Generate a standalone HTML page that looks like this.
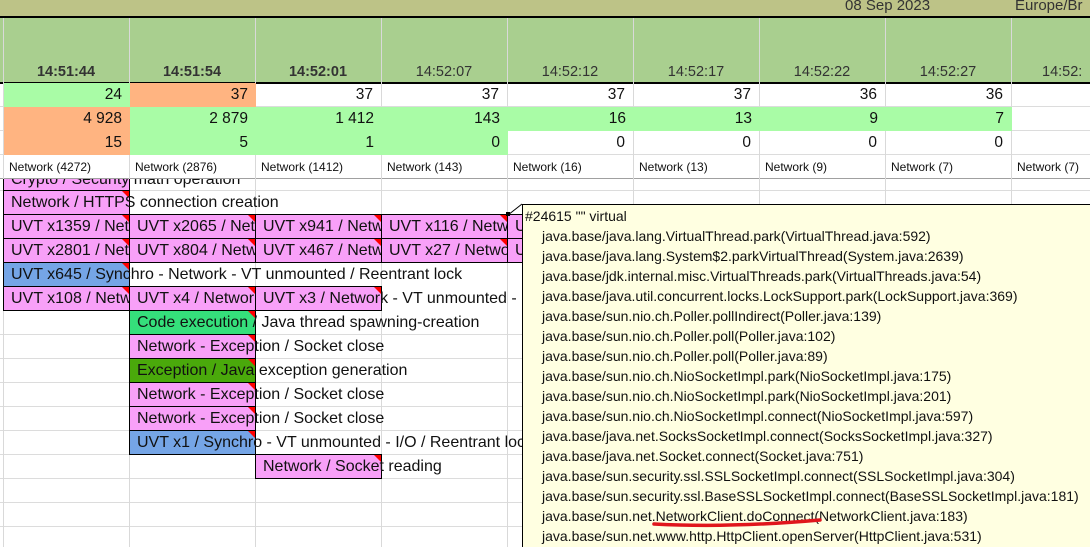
<!DOCTYPE html>
<html><head><meta charset="utf-8"><style>
*{margin:0;padding:0;box-sizing:border-box}
html,body{width:1090px;height:547px;overflow:hidden}
body{background:#fff;position:relative;font-family:"Liberation Sans",Calibri,sans-serif;color:#111}
.a{position:absolute}
.vl{position:absolute;width:1px;background:#d9d9d9}
.hl{position:absolute;height:1px;background:#dcdcdc;left:0;width:1090px}
.ts{position:absolute;top:64px;width:126px;text-align:center;font-size:14.5px;color:#333}
.num{position:absolute;height:24px;width:126px;text-align:right;padding-right:8px;font-size:15.5px;line-height:24px}
.net{position:absolute;top:155px;height:23px;font-size:12px;line-height:24px;padding-left:6px;color:#111}
.c{position:absolute;height:25px;width:127px;border:1px solid #000;}
.c::after{content:"";position:absolute;right:0;top:0;border-top:7px solid #f00;border-left:7px solid transparent}
.t{position:absolute;font-size:16px;line-height:24px;white-space:nowrap;overflow:hidden;color:#111}
.pk{background:#f8a0f8}.bl{background:#75a5e6}.gr{background:#35df7b}.dg{background:#4aa90b}
.tip{position:absolute;left:522px;top:204px;width:600px;height:343px;background:#ffffe1;border:1px solid #000;border-bottom:none;border-right:none;overflow:hidden}
.tl{position:absolute;left:19px;font-size:14px;line-height:20px;white-space:nowrap;color:#111}
</style></head><body>
<div class="a" style="left:0;top:0;width:1090px;height:16px;background:#bdc387"></div>
<div class="a" style="left:845px;top:-3px;font-size:15px;color:#333">08 Sep 2023</div>
<div class="a" style="left:1015px;top:-3px;font-size:15px;color:#333">Europe/Br</div>
<div class="a" style="left:0;top:16px;width:1090px;height:2px;background:#000"></div>
<div class="a" style="left:0;top:18px;width:1090px;height:64px;background:#a9cf8f"></div>
<div class="a" style="left:0;top:82px;width:1090px;height:2px;background:#000"></div>

<div class="hl" style="top:106px"></div><div class="hl" style="top:130px"></div><div class="hl" style="top:154px"></div>
<div class="a" style="left:0;top:178px;width:1090px;height:1px;background:#a0a0a0"></div>
<div class="hl" style="top:190px"></div>
<div class="hl" style="top:334px"></div><div class="hl" style="top:358px"></div><div class="hl" style="top:382px"></div><div class="hl" style="top:406px"></div><div class="hl" style="top:430px"></div><div class="hl" style="top:454px"></div><div class="hl" style="top:478px"></div><div class="hl" style="top:502px"></div><div class="hl" style="top:526px"></div>
<div class="vl" style="left:3px;top:18px;height:530px"></div>
<div class="vl" style="left:129px;top:18px;height:530px"></div>
<div class="vl" style="left:255px;top:18px;height:530px"></div>
<div class="vl" style="left:381px;top:18px;height:530px"></div>
<div class="vl" style="left:507px;top:18px;height:530px"></div>
<div class="vl" style="left:633px;top:18px;height:530px"></div>
<div class="vl" style="left:759px;top:18px;height:530px"></div>
<div class="vl" style="left:885px;top:18px;height:530px"></div>
<div class="vl" style="left:1011px;top:18px;height:530px"></div>

<div class="ts" style="left:3px;font-weight:bold">14:51:44</div>
<div class="ts" style="left:129px;font-weight:bold">14:51:54</div>
<div class="ts" style="left:255px;font-weight:bold">14:52:01</div>
<div class="ts" style="left:381px">14:52:07</div>
<div class="ts" style="left:507px">14:52:12</div>
<div class="ts" style="left:633px">14:52:17</div>
<div class="ts" style="left:759px">14:52:22</div>
<div class="ts" style="left:885px">14:52:27</div>
<div class="ts" style="left:1011px;text-align:left;padding-left:31px">14:52:</div>

<div class="num" style="left:4px;top:83px;background:#a9fca6">24</div>
<div class="num" style="left:130px;top:83px;background:#ffb481">37</div>
<div class="num" style="left:255px;top:83px">37</div>
<div class="num" style="left:381px;top:83px">37</div>
<div class="num" style="left:507px;top:83px">37</div>
<div class="num" style="left:633px;top:83px">37</div>
<div class="num" style="left:759px;top:83px">36</div>
<div class="num" style="left:885px;top:83px">36</div>

<div class="num" style="left:4px;top:107px;background:#ffb481">4 928</div>
<div class="num" style="left:130px;top:107px;background:#a9fca6">2 879</div>
<div class="num" style="left:256px;top:107px;background:#a9fca6">1 412</div>
<div class="num" style="left:382px;top:107px;background:#a9fca6">143</div>
<div class="num" style="left:508px;top:107px;background:#a9fca6">16</div>
<div class="num" style="left:634px;top:107px;background:#a9fca6">13</div>
<div class="num" style="left:760px;top:107px;background:#a9fca6">9</div>
<div class="num" style="left:886px;top:107px;background:#a9fca6">7</div>

<div class="num" style="left:4px;top:131px;background:#ffb481">15</div>
<div class="num" style="left:130px;top:131px;background:#a9fca6">5</div>
<div class="num" style="left:256px;top:131px;background:#a9fca6">1</div>
<div class="num" style="left:382px;top:131px;background:#a9fca6">0</div>
<div class="num" style="left:507px;top:131px">0</div>
<div class="num" style="left:633px;top:131px">0</div>
<div class="num" style="left:759px;top:131px">0</div>
<div class="num" style="left:885px;top:131px">0</div>

<div class="net" style="left:3px">Network (4272)</div>
<div class="net" style="left:129px">Network (2876)</div>
<div class="net" style="left:255px">Network (1412)</div>
<div class="net" style="left:381px">Network (143)</div>
<div class="net" style="left:507px">Network (16)</div>
<div class="net" style="left:633px">Network (13)</div>
<div class="net" style="left:759px">Network (9)</div>
<div class="net" style="left:885px">Network (7)</div>
<div class="net" style="left:1011px">Network (7)</div>

<div class="a" style="left:3px;top:179px;width:1087px;height:12px;overflow:hidden">
 <div class="a pk" style="left:0;top:0;width:127px;height:12px;border-left:1px solid #000;border-right:1px solid #000"></div>
 <div class="t" style="left:8px;top:-11px">Crypto / Security math operation</div>
</div>

<div class="c pk" style="left:3px;top:190px"></div><div class="t" style="left:11px;top:191px">Network / HTTPS connection creation</div>

<div class="c pk" style="left:3px;top:214px"></div><div class="t" style="left:11px;top:215px;width:118px">UVT x1359 / Network</div>
<div class="c pk" style="left:129px;top:214px"></div><div class="t" style="left:137px;top:215px;width:118px">UVT x2065 / Network</div>
<div class="c pk" style="left:255px;top:214px"></div><div class="t" style="left:263px;top:215px;width:118px">UVT x941 / Network</div>
<div class="c pk" style="left:381px;top:214px"></div><div class="t" style="left:389px;top:215px;width:118px">UVT x116 / Network</div>
<div class="c pk" style="left:507px;top:214px"></div><div class="t" style="left:515px;top:215px;width:118px">UVT</div>

<div class="c pk" style="left:3px;top:238px"></div><div class="t" style="left:11px;top:239px;width:118px">UVT x2801 / Network</div>
<div class="c pk" style="left:129px;top:238px"></div><div class="t" style="left:137px;top:239px;width:118px">UVT x804 / Network</div>
<div class="c pk" style="left:255px;top:238px"></div><div class="t" style="left:263px;top:239px;width:118px">UVT x467 / Network</div>
<div class="c pk" style="left:381px;top:238px"></div><div class="t" style="left:389px;top:239px;width:118px">UVT x27 / Network</div>
<div class="c pk" style="left:507px;top:238px"></div><div class="t" style="left:515px;top:239px;width:118px">UVT</div>

<div class="c bl" style="left:3px;top:262px"></div><div class="t" style="left:11px;top:263px">UVT x645 / Synchro - Network - VT unmounted / Reentrant lock</div>

<div class="c pk" style="left:3px;top:286px"></div><div class="t" style="left:11px;top:287px;width:118px">UVT x108 / Network</div>
<div class="c pk" style="left:129px;top:286px"></div><div class="t" style="left:137px;top:287px;width:118px">UVT x4 / Network</div>
<div class="c pk" style="left:255px;top:286px"></div><div class="t" style="left:263px;top:287px">UVT x3 / Network - VT unmounted - I/O</div>

<div class="c gr" style="left:129px;top:310px"></div><div class="t" style="left:137px;top:311px">Code execution / Java thread spawning-creation</div>
<div class="c pk" style="left:129px;top:334px"></div><div class="t" style="left:137px;top:335px">Network - Exception / Socket close</div>
<div class="c dg" style="left:129px;top:358px"></div><div class="t" style="left:137px;top:359px">Exception / Java exception generation</div>
<div class="c pk" style="left:129px;top:382px"></div><div class="t" style="left:137px;top:383px">Network - Exception / Socket close</div>
<div class="c pk" style="left:129px;top:406px"></div><div class="t" style="left:137px;top:407px">Network - Exception / Socket close</div>
<div class="c bl" style="left:129px;top:430px"></div><div class="t" style="left:137px;top:431px">UVT x1 / Synchro - VT unmounted - I/O / Reentrant lock</div>
<div class="c pk" style="left:255px;top:454px"></div><div class="t" style="left:263px;top:455px">Network / Socket reading</div>

<svg class="a" style="left:500px;top:198px" width="30" height="22"><line x1="8" y1="17" x2="22" y2="6" stroke="#000" stroke-width="1"/><rect x="6" y="14" width="4" height="4" fill="#000"/></svg>
<div class="tip">
<div class="tl" style="left:2px;top:1px">#24615 "" virtual</div>
<div class="tl" style="top:21px">java.base/java.lang.VirtualThread.park(VirtualThread.java:592)</div>
<div class="tl" style="top:41px">java.base/java.lang.System$2.parkVirtualThread(System.java:2639)</div>
<div class="tl" style="top:61px">java.base/jdk.internal.misc.VirtualThreads.park(VirtualThreads.java:54)</div>
<div class="tl" style="top:81px">java.base/java.util.concurrent.locks.LockSupport.park(LockSupport.java:369)</div>
<div class="tl" style="top:101px">java.base/sun.nio.ch.Poller.pollIndirect(Poller.java:139)</div>
<div class="tl" style="top:121px">java.base/sun.nio.ch.Poller.poll(Poller.java:102)</div>
<div class="tl" style="top:141px">java.base/sun.nio.ch.Poller.poll(Poller.java:89)</div>
<div class="tl" style="top:161px">java.base/sun.nio.ch.NioSocketImpl.park(NioSocketImpl.java:175)</div>
<div class="tl" style="top:181px">java.base/sun.nio.ch.NioSocketImpl.park(NioSocketImpl.java:201)</div>
<div class="tl" style="top:201px">java.base/sun.nio.ch.NioSocketImpl.connect(NioSocketImpl.java:597)</div>
<div class="tl" style="top:221px">java.base/java.net.SocksSocketImpl.connect(SocksSocketImpl.java:327)</div>
<div class="tl" style="top:241px">java.base/java.net.Socket.connect(Socket.java:751)</div>
<div class="tl" style="top:261px">java.base/sun.security.ssl.SSLSocketImpl.connect(SSLSocketImpl.java:304)</div>
<div class="tl" style="top:281px">java.base/sun.security.ssl.BaseSSLSocketImpl.connect(BaseSSLSocketImpl.java:181)</div>
<div class="tl" style="top:301px">java.base/sun.net.NetworkClient.doConnect(NetworkClient.java:183)</div>
<div class="tl" style="top:321px">java.base/sun.net.www.http.HttpClient.openServer(HttpClient.java:531)</div>
</div>
<svg class="a" style="left:640px;top:512px" width="200" height="20"><path d="M14 12 Q90 16 180 8" stroke="#e0161c" stroke-width="3.5" fill="none" stroke-linecap="round"/></svg>
</body></html>
